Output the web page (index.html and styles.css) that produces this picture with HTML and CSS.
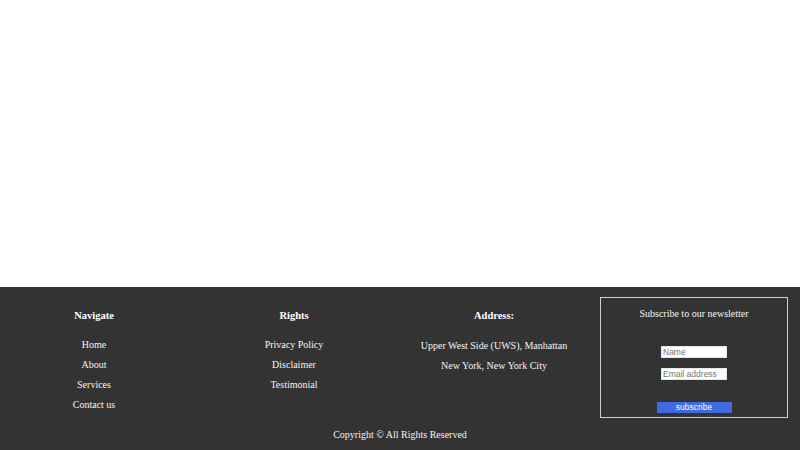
FILE: index.html
```html
<!DOCTYPE html>
<html>
<head>
<meta charset="utf-8">
<link rel="stylesheet" href="styles.css">
</head>
<body>
<main class="main"></main>
<footer class="footer">
  <div class="cols">
    <div class="col">
      <h4 class="col-title">Navigate</h4>
      <ul class="links">
        <li>Home</li>
        <li>About</li>
        <li>Services</li>
        <li>Contact us</li>
      </ul>
    </div>
    <div class="col">
      <h4 class="col-title">Rights</h4>
      <ul class="links">
        <li>Privacy Policy</li>
        <li>Disclaimer</li>
        <li>Testimonial</li>
      </ul>
    </div>
    <div class="col">
      <h4 class="col-title">Address:</h4>
      <div class="address">
        <p>Upper West Side (UWS), Manhattan</p>
        <p>New York, New York City</p>
      </div>
    </div>
    <div class="col newsletter">
      <p class="news-title">Subscribe to our newsletter</p>
      <form class="news-form">
        <input class="field field-name" type="text" placeholder="Name">
        <input class="field field-email" type="email" placeholder="Email address">
        <button class="btn" type="button">subscribe</button>
      </form>
    </div>
  </div>
  <p class="copyright">Copyright © All Rights Reserved</p>
</footer>
</body>
</html>
```

FILE: styles.css
```css
html, body {
  margin: 0;
  padding: 0;
  background: #ffffff;
}
.main {
  height: 287px;
}
.footer {
  background: #333333;
  color: #f4f4f4;
  font-family: "Liberation Serif", "Times New Roman", serif;
  font-size: 10px;
  padding-top: 10px;
  height: 163px;
  box-sizing: border-box;
}
.cols {
  display: flex;
  gap: 12px;
}
.col {
  width: 188px;
  text-align: center;
  padding-top: 12px;
}
.col-title {
  margin: 0 0 12px;
  font-size: 10.5px;
  line-height: 14px;
  font-weight: bold;
  color: #ffffff;
}
.links {
  list-style: none;
  margin: 0;
  padding: 0;
}
.links li {
  line-height: 20px;
}
.address {
  padding-top: 1px;
}
.address p {
  margin: 0;
  line-height: 20px;
}
.newsletter {
  border: 1px solid #cfcfcf;
  padding: 9px 0 4px;
  box-sizing: border-box;
  height: 121px;
}
.news-title {
  margin: 0;
  line-height: 14px;
}
.news-form {
  display: flex;
  flex-direction: column;
  align-items: center;
  padding-top: 25px;
}
.field {
  width: 66px;
  height: 12px;
  box-sizing: border-box;
  border: 1px solid #e6e6e6;
  background: #ffffff;
  padding: 0 1px;
  font-family: "Liberation Sans", Arial, sans-serif;
  font-size: 8.5px;
  color: #222;
  outline: none;
  margin: 0;
}
.field::placeholder {
  color: #757575;
}
.field-email {
  margin-top: 10px;
}
.btn {
  margin-top: 22px;
  width: 75px;
  height: 11px;
  padding: 0;
  border: none;
  background: #4169e1;
  color: #ffffff;
  font-family: "Liberation Sans", Arial, sans-serif;
  font-size: 8.5px;
  line-height: 11px;
}
.copyright {
  margin: 10px 0 0;
  text-align: center;
  line-height: 14px;
}
```
